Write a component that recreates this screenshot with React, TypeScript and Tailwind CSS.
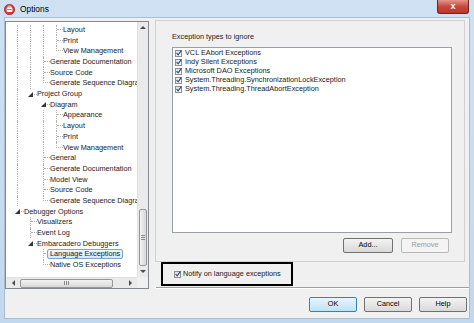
import React from 'react';

const rows: { cells: string; label: string; selected?: boolean }[] = [
  { cells: 'IIIT', label: 'Layout' },
  { cells: 'IIIT', label: 'Print' },
  { cells: 'IIIL', label: 'View Management' },
  { cells: 'IIT', label: 'Generate Documentation' },
  { cells: 'IIT', label: 'Source Code' },
  { cells: 'IIL', label: 'Generate Sequence Diagram' },
  { cells: 'IE', label: 'Project Group' },
  { cells: 'I E', label: 'Diagram' },
  { cells: 'I IT', label: 'Appearance' },
  { cells: 'I IT', label: 'Layout' },
  { cells: 'I IT', label: 'Print' },
  { cells: 'I IL', label: 'View Management' },
  { cells: 'I T', label: 'General' },
  { cells: 'I T', label: 'Generate Documentation' },
  { cells: 'I T', label: 'Model View' },
  { cells: 'I T', label: 'Source Code' },
  { cells: 'I L', label: 'Generate Sequence Diagram' },
  { cells: 'E', label: 'Debugger Options' },
  { cells: ' T', label: 'Visualizers' },
  { cells: ' T', label: 'Event Log' },
  { cells: ' E', label: 'Embarcadero Debuggers' },
  { cells: '  T', label: 'Language Exceptions', selected: true },
  { cells: '  L', label: 'Native OS Exceptions' },
];

const exceptions = [
  'VCL EAbort Exceptions',
  'Indy Silent Exceptions',
  'Microsoft DAO Exceptions',
  'System.Threading.SynchronizationLockException',
  'System.Threading.ThreadAbortException',
];

const Guide = ({ kind }: { kind: string }) => {
  if (kind === 'I')
    return (
      <div className="w-[13px] h-full shrink-0 pl-[6px]">
        <div className="h-full border-l border-dotted border-[#b0b0b0]" />
      </div>
    );
  if (kind === 'T')
    return (
      <div className="w-[13px] h-full shrink-0 pl-[6px]">
        <div className="h-full border-l border-dotted border-[#b0b0b0]">
          <div className="h-1/2 border-b border-dotted border-[#b0b0b0]" />
        </div>
      </div>
    );
  if (kind === 'L')
    return (
      <div className="w-[13px] h-full shrink-0 pl-[6px]">
        <div className="h-1/2 border-l border-b border-dotted border-[#b0b0b0]" />
      </div>
    );
  if (kind === 'E')
    return (
      <div className="w-[13px] h-full shrink-0 flex items-center pl-[4px]">
        <svg width="5" height="5" viewBox="0 0 5 5">
          <polygon points="0,5 5,5 5,0" fill="#333" />
        </svg>
        <div className="w-[3px] ml-[1px] border-t border-dotted border-[#b0b0b0]" />
      </div>
    );
  return <div className="w-[13px] h-full shrink-0" />;
};

const Check = () => (
  <div className="w-[7px] h-[7px] border border-[#8f8f8f] bg-linear-to-br from-[#dcdcdc] to-white flex items-center justify-center shrink-0">
    <svg width="6" height="6" viewBox="0 0 6 6" className="overflow-visible">
      <path d="M0.6 3.1 L2.2 4.9 L5.4 0.4" stroke="#2e4a8a" strokeWidth="1.2" fill="none" />
    </svg>
  </div>
);

const Btn = ({ label, kind }: { label: string; kind?: 'default' | 'disabled' }) => {
  const cls =
    kind === 'default'
      ? 'border-[#3c7fb1] bg-linear-to-b from-[#e8f5fd] to-[#bde3f6] text-black'
      : kind === 'disabled'
      ? 'border-[#b5b8ba] bg-[#f4f4f4] text-[#9a9a9a]'
      : 'border-[#707070] bg-linear-to-b from-[#f3f3f3] to-[#d9d9d9] text-black';
  return (
    <div className={`h-[15px] rounded-[2px] border flex items-center justify-center ${cls}`}>
      {label}
    </div>
  );
};

const Arrow = ({ dir }: { dir: 'up' | 'down' | 'left' | 'right' }) => {
  const pts = {
    up: '0,3 3,0 6,3',
    down: '0,0 3,3 6,0',
    left: '3,0 0,3 3,6',
    right: '0,0 3,3 0,6',
  }[dir];
  const w = dir === 'up' || dir === 'down' ? 6 : 3;
  const h = dir === 'up' || dir === 'down' ? 3 : 6;
  return (
    <svg width={w} height={h} viewBox={`0 0 ${w} ${h}`}>
      <polygon points={pts} fill="#4d4d4d" />
    </svg>
  );
};

export default function App() {
  return (
    <div
      className="w-[474px] h-[323px] bg-linear-to-b from-[#cfe1f3] to-[#c2d8ef] flex flex-col text-[7.3px] text-[#1a1a1a] overflow-hidden"
      style={{ fontFamily: '"Liberation Sans", Arial, sans-serif' }}
    >
      {/* title bar */}
      <div className="h-[17px] flex items-start shrink-0">
        <div className="pl-[4px] pt-[4px] flex items-center gap-[5px]">
          <svg width="11" height="11" viewBox="0 0 11 11">
            <circle cx="5.5" cy="5.5" r="5.2" fill="#d6383b" stroke="#9a1e22" strokeWidth="0.6" />
            <rect x="2.6" y="3.6" width="5.8" height="4.4" rx="0.8" fill="#fff" />
            <rect x="4" y="2.2" width="3" height="1.8" rx="0.5" fill="none" stroke="#fff" strokeWidth="0.8" />
            <rect x="3.4" y="5.2" width="4.2" height="0.8" fill="#d6383b" />
          </svg>
          <span className="text-[8.4px] text-black leading-none">Options</span>
        </div>
        <div className="flex-1" />
        <div className="w-[32px] h-[14px] mr-[5px] rounded-b-[3px] border border-t-0 border-[#6e2520] bg-linear-to-b from-[#e3938a] via-[#c9473b] to-[#b8382c] flex items-center justify-center">
          <span className="text-white text-[9px] font-bold leading-none">x</span>
        </div>
      </div>

      {/* client */}
      <div className="flex-1 mx-[4px] mb-[4px] bg-[#f0f0f0] border border-[#a9bdd4] flex flex-col">
        <div className="h-[273px] flex shrink-0">
          {/* tree */}
          <div className="mt-[3px] w-[144px] h-[268px] border border-[#828790] bg-white flex flex-col">
            <div className="flex-1 flex min-h-0">
              <div className="flex-1 overflow-hidden pt-[2.6px] pl-[5px]">
                {rows.map((r, i) => (
                  <div key={i} className="h-[10.7px] flex items-stretch whitespace-nowrap">
                    {r.cells.split('').map((c, j) => (
                      <Guide key={j} kind={c} />
                    ))}
                    <div className="flex items-center">
                      <span
                        className={`-ml-[3px] px-[2px] h-[10px] leading-[8px] border rounded-[2px] ${
                          r.selected ? 'border-[#7da2ce] bg-linear-to-b from-[#eef5fd] to-[#d6e8fb]' : 'border-transparent'
                        }`}
                      >
                        {r.label}
                      </span>
                    </div>
                  </div>
                ))}
              </div>
              {/* vertical scrollbar */}
              <div className="w-[11px] bg-[#eaeaea] border-l border-[#e0e0e0] flex flex-col">
                <div className="h-[11px] flex items-center justify-center">
                  <Arrow dir="up" />
                </div>
                <div className="flex-1 flex flex-col justify-end">
                  <div className="h-[57px] mx-[1px] rounded-[2px] border border-[#979797] bg-linear-to-r from-[#f2f2f2] to-[#d8d8d8] flex flex-col items-center justify-center gap-[1px]">
                    <div className="w-[4px] border-t border-[#8a8a8a]" />
                    <div className="w-[4px] border-t border-[#8a8a8a]" />
                    <div className="w-[4px] border-t border-[#8a8a8a]" />
                  </div>
                </div>
                <div className="h-[11px] flex items-center justify-center">
                  <Arrow dir="down" />
                </div>
              </div>
            </div>
            {/* horizontal scrollbar */}
            <div className="h-[11px] flex">
              <div className="flex-1 bg-[#eaeaea] border-t border-[#e0e0e0] flex">
                <div className="w-[14px] flex items-center justify-center">
                  <Arrow dir="left" />
                </div>
                <div className="flex-1 flex items-center">
                  <div className="w-[93px] h-[9px] rounded-[2px] border border-[#979797] bg-linear-to-b from-[#f2f2f2] to-[#d8d8d8] flex items-center justify-center gap-[1px]">
                    <div className="h-[4px] border-l border-[#8a8a8a]" />
                    <div className="h-[4px] border-l border-[#8a8a8a]" />
                    <div className="h-[4px] border-l border-[#8a8a8a]" />
                  </div>
                </div>
                <div className="w-[14px] flex items-center justify-center">
                  <Arrow dir="right" />
                </div>
              </div>
              <div className="w-[11px] bg-[#f0f0f0]" />
            </div>
          </div>

          {/* right column */}
          <div className="flex-1 ml-[6px] pt-[2px] flex flex-col">
            <div className="h-[242px] mr-[4px] border border-[#d0d0d0] pl-[16px] pr-[10px] pt-[12px] flex flex-col">
              <div className="h-[14px] leading-[8px]">Exception types to ignore</div>
              <div className="h-[186px] w-[280px] border border-[#9a9ea6] bg-white pt-[0.5px]">
                {exceptions.map((e) => (
                  <div key={e} className="h-[9px] flex items-center gap-[3px] pl-[2px] whitespace-nowrap">
                    <Check />
                    <span className="leading-[8px]">{e}</span>
                  </div>
                ))}
              </div>
              <div className="mt-[5px] w-[280px] flex justify-end gap-[8px] pr-[3px]">
                <div className="w-[50px]">
                  <Btn label="Add..." />
                </div>
                <div className="w-[48px]">
                  <Btn label="Remove" kind="disabled" />
                </div>
              </div>
            </div>
            <div className="ml-[6px] w-[132px] h-[24px] border-2 border-black flex items-center pl-[11px] gap-[2px]">
              <Check />
              <span className="leading-[8px]">Notify on language exceptions</span>
            </div>
            <div className="mt-[1px] ml-[1px] border-t border-[#a0a0a0]" />
            <div className="ml-[1px] border-t border-white" />
          </div>
        </div>

        {/* dialog buttons */}
        <div className="mt-[6px] flex justify-end gap-[7px] pr-[2px]">
          <div className="w-[48px]">
            <Btn label="OK" kind="default" />
          </div>
          <div className="w-[48px]">
            <Btn label="Cancel" />
          </div>
          <div className="w-[48px]">
            <Btn label="Help" />
          </div>
        </div>
      </div>
    </div>
  );
}
